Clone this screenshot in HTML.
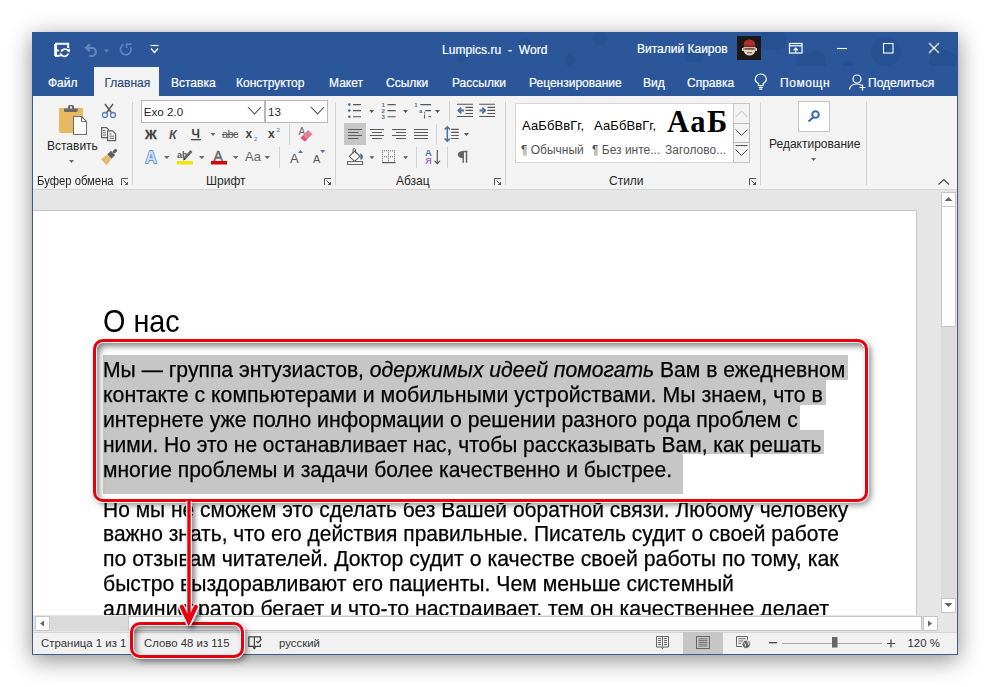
<!DOCTYPE html>
<html><head><meta charset="utf-8">
<style>
*{margin:0;padding:0;box-sizing:border-box}
html,body{width:990px;height:687px;overflow:hidden;background:#fff;font-family:"Liberation Sans",sans-serif}
.a{position:absolute;white-space:nowrap}
svg{position:absolute;overflow:visible}
#win{position:absolute;left:32px;top:32px;width:926px;height:623px;background:#2b579a;box-shadow:0 5px 22px rgba(0,0,0,.45)}
.t{color:#fff;font-size:12px;line-height:14px;-webkit-text-stroke:.2px #fff}
.rb{color:#262626;font-size:12px;line-height:14px}
.sep{position:absolute;width:1px;background:#d4d4d4}
.dl{line-height:14px;font-size:21.7px;color:#000;transform-origin:0 0}
</style></head><body>
<div id="win"></div>

<!-- ============ TITLE BAR ============ -->
<svg style="left:0;top:0" width="990" height="70">
  <defs><clipPath id="tc"><rect x="33" y="32" width="924" height="34"/></clipPath></defs>
  <g fill="#24508f" opacity=".6" clip-path="url(#tc)">
    <circle cx="525" cy="44" r="6"/><circle cx="462" cy="58" r="5"/><circle cx="570" cy="60" r="6"/>
    <circle cx="600" cy="38" r="7"/><rect x="684" y="46" width="20" height="16" rx="5"/>
    <rect x="760" y="30" width="26" height="20" rx="7"/><rect x="796" y="52" width="30" height="20" rx="6" transform="rotate(-12 811 62)"/>
    <circle cx="886" cy="52" r="15"/><rect x="930" y="50" width="26" height="20" rx="5" transform="rotate(20 943 60)"/>
    <circle cx="848" cy="66" r="6"/>
  </g>
  <!-- save -->
  <g fill="none" stroke="#fff" stroke-width="2">
    <path d="M56 56.5 V43.7 H68.2 V48"/><path d="M55.2 55.8 H59.5"/><path d="M55.5 44 V56" stroke-width="2.6"/>
  </g>
  <rect x="56" y="49.5" width="2.8" height="2" fill="#fff"/>
  <g fill="none" stroke="#fff" stroke-width="1.7">
    <path d="M61.2 51.8 A3.9 3.9 0 0 1 68.2 50.8"/><path d="M68.2 53.6 A3.9 3.9 0 0 1 61.3 54.8"/>
  </g>
  <path d="M66.3 50 L70.2 48.6 L69.6 52.8Z M63.2 55.4 L59.4 56.8 L59.9 52.6Z" fill="#fff"/>
  <!-- undo -->
  <g fill="none" stroke="#6386c2" stroke-width="2.2">
    <path d="M86.5 47.8 H91.8 A4.1 4.1 0 0 1 91.8 56 H89.5"/><path d="M89.8 44.3 L86.2 47.8 L89.8 51.3"/>
  </g>
  <path d="M104 49.5 H109 L106.5 52.5Z" fill="#6386c2"/>
  <!-- redo -->
  <g fill="none" stroke="#5e83c0" stroke-width="1.7">
    <path d="M123.5 44.6 A5.3 5.3 0 1 0 130.6 47.2"/><path d="M126.6 48 V44.2 H131.5"/>
  </g>
  <!-- customize -->
  <g fill="none" stroke="#fff" stroke-width="1.2">
    <path d="M150.5 45.5 H158.5"/><path d="M151 48.5 L154.5 52.5 L158 48.5"/>
  </g>
  <!-- ribbon display options -->
  <g fill="none" stroke="#fff" stroke-width="1.2">
    <rect x="789.5" y="43.5" width="12.5" height="9.5"/><path d="M789.5 45.8 H802"/><path d="M795.75 53 V48.3 M793.6 50.4 L795.75 48.2 L797.9 50.4"/>
  </g>
  <!-- min max close -->
  <g fill="none" stroke="#fff" stroke-width="1.1">
    <path d="M837 48.5 H847"/>
    <rect x="883.5" y="43.5" width="9.5" height="9.5"/>
    <path d="M929 43 L939 53 M939 43 L929 53"/>
  </g>
  <!-- avatar -->
  <rect x="737" y="36" width="24" height="24" fill="#1c1818"/>
  <path d="M743.5 45.5 Q743.5 39.5 749.5 39.5 Q755 39.5 755.5 45.5 Z" fill="#b0302e"/>
  <path d="M744 45 H755.5 V47 H744Z" fill="#8e2424"/>
  <path d="M743.5 47 H755.5 V50.5 Q754 55.5 749.5 55.5 Q745 55.5 743.5 50.5Z" fill="#e9d3bb"/>
  <rect x="744.5" y="47.8" width="10" height="2" fill="#6b5a52"/>
  <rect x="747" y="52" width="5" height="1.3" fill="#8a7268"/>
  <rect x="742" y="48" width="1.5" height="3" fill="#e9d3bb"/><rect x="755.5" y="48" width="1.5" height="3" fill="#e9d3bb"/>
</svg>
<div class="a t" style="left:442px;top:43px;letter-spacing:.05px">Lumpics.ru&nbsp; - &nbsp;Word</div>
<div class="a t" style="left:637px;top:42px">Виталий Каиров</div>

<!-- ============ TABS ============ -->
<div class="a" style="left:94px;top:67px;width:65px;height:29px;background:#f3f3f3"></div>
<div class="a t" style="left:48px;top:75.5px">Файл</div>
<div class="a t" style="left:104.5px;top:75.5px;color:#2d4c7c;-webkit-text-stroke:.2px #2d4c7c">Главная</div>
<div class="a t" style="left:171px;top:75.5px">Вставка</div>
<div class="a t" style="left:236px;top:75.5px">Конструктор</div>
<div class="a t" style="left:329px;top:75.5px">Макет</div>
<div class="a t" style="left:386px;top:75.5px">Ссылки</div>
<div class="a t" style="left:452px;top:75.5px">Рассылки</div>
<div class="a t" style="left:529px;top:75.5px">Рецензирование</div>
<div class="a t" style="left:643px;top:75.5px">Вид</div>
<div class="a t" style="left:687px;top:75.5px">Справка</div>
<div class="a t" style="left:780px;top:75.5px;letter-spacing:.6px">Помощн</div>
<div class="a t" style="left:868px;top:75.5px">Поделиться</div>
<svg style="left:0;top:0" width="990" height="100">
  <g fill="none" stroke="#fff" stroke-width="1.2">
    <path d="M758.5 85.5 V83.5 Q755.2 81.8 755.2 79.6 A5.6 5.6 0 0 1 766.4 79.6 Q766.4 81.8 763.1 83.5 V85.5 Z"/>
    <path d="M758.8 87.3 H762.8 M759.3 89.2 H762.3"/>
    <circle cx="857" cy="79" r="4"/><path d="M849.5 89.5 Q850 84 857 84 Q860 84 861.5 85.5"/>
    <path d="M859.5 87.5 H865.5 M862.5 84.5 V90.5"/>
  </g>
</svg>

<!-- ============ RIBBON ============ -->
<div class="a" style="left:33px;top:96px;width:924px;height:94px;background:#f3f3f3;border-bottom:1px solid #d5d5d5"></div>
<!-- group labels -->
<div class="a rb" style="left:37px;top:174px;transform:scaleX(.94);transform-origin:0 0">Буфер обмена</div>
<div class="a rb" style="left:206px;top:174px">Шрифт</div>
<div class="a rb" style="left:396px;top:174px">Абзац</div>
<div class="a rb" style="left:609px;top:174px">Стили</div>
<div class="a rb" style="left:47px;top:139px">Вставить</div>
<div class="a rb" style="left:769px;top:137px">Редактирование</div>
<!-- combos -->
<div class="a" style="left:141px;top:100px;width:124px;height:23px;background:#fff;border:1px solid #b8b8b8"></div>
<div class="a" style="left:265px;top:100px;width:63px;height:23px;background:#fff;border:1px solid #b8b8b8"></div>
<div class="a rb" style="left:143.8px;top:104.6px;font-size:11.6px;letter-spacing:0">Exo 2.0</div>
<div class="a rb" style="left:268px;top:104.6px;font-size:11.6px">13</div>
<!-- styles gallery -->
<div class="a" style="left:515px;top:103px;width:219px;height:60px;background:#fff;border:1px solid #d6d6d6"></div>
<div class="a" style="left:733px;top:103px;width:17px;height:60px;background:#f3f3f3;border:1px solid #c6c6c6"></div>
<div class="a" style="left:733px;top:123px;width:17px;height:20px;border:1px solid #b8b8b8;background:#f3f3f3"></div>
<div class="a" style="left:522px;top:119px;font-size:13px;color:#000;line-height:14px;letter-spacing:.1px">АаБбВвГг,</div>
<div class="a" style="left:594px;top:119px;font-size:13px;color:#000;line-height:14px;letter-spacing:.1px">АаБбВвГг,</div>
<div class="a" style="left:667px;top:106px;font-family:'Liberation Serif',serif;font-weight:bold;font-size:30.6px;line-height:32px;color:#000;letter-spacing:1.5px">АаБ</div>
<div class="a" style="left:521px;top:143px;font-size:12px;color:#555;line-height:14px">¶ Обычный</div>
<div class="a" style="left:592px;top:143px;font-size:12px;color:#555;line-height:14px">¶ Без инте...</div>
<div class="a" style="left:665px;top:143px;font-size:12px;color:#555;line-height:14px">Заголово...</div>
<!-- editing box -->
<div class="a" style="left:798px;top:101px;width:32px;height:31px;background:#fff;border:1px solid #c6c6c6"></div>
<!-- selected align-left bg -->
<div class="a" style="left:344px;top:123px;width:22px;height:22px;background:#c6c6c6"></div>
<svg style="left:0;top:0" width="990" height="200">
  <!-- separators -->
  <g fill="#d2d2d2">
    <rect x="132" y="102" width="1" height="83"/>
    <rect x="335" y="102" width="1" height="83"/>
    <rect x="505" y="102" width="1" height="83"/>
    <rect x="760" y="102" width="1" height="83"/>
    <rect x="866" y="102" width="1" height="83"/>
    <rect x="289" y="124" width="1" height="21"/>
    <rect x="279" y="147" width="1" height="21"/>
    <rect x="449" y="101" width="1" height="20"/>
    <rect x="436" y="124" width="1" height="21"/>
    <rect x="416" y="147" width="1" height="21"/>
    <rect x="447" y="147" width="1" height="21"/>
  </g>
  <!-- launchers -->
  <g fill="none" stroke="#555" stroke-width="1">
    <path d="M121.5 185 V178.5 H128"/><path d="M123.5 180.5 L127.5 184.5 M125 184.5 H127.5 V182"/>
    <path d="M324.5 185 V178.5 H331"/><path d="M326.5 180.5 L330.5 184.5 M328 184.5 H330.5 V182"/>
    <path d="M494.5 185 V178.5 H501"/><path d="M496.5 180.5 L500.5 184.5 M498 184.5 H500.5 V182"/>
    <path d="M749.5 185 V178.5 H756"/><path d="M751.5 180.5 L755.5 184.5 M753 184.5 H755.5 V182"/>
  </g>
  <!-- paste -->
  <rect x="59" y="108" width="24" height="25" rx="1" fill="#e8b964"/>
  <path d="M64 108.5 H77.7 V110.5 Q77.7 112 76.2 112 H65.5 Q64 112 64 110.5Z" fill="#6a6a6a"/><rect x="68" y="105" width="6" height="4.5" rx="1.5" fill="#6a6a6a"/><rect x="70" y="106.5" width="2" height="2" fill="#eee"/>
  <path d="M73.5 116.5 H81.5 L86.5 121.5 V134.5 H73.5Z" fill="#fff" stroke="#6f6f6f" stroke-width="1.1"/>
  <path d="M81.5 116.5 V121.5 H86.5" fill="none" stroke="#6f6f6f" stroke-width="1.1"/>
  <path d="M69 160 H74 L71.5 163Z" fill="#666"/>
  <!-- scissors -->
  <g fill="none" stroke="#5a5a5a" stroke-width="1.5"><path d="M105 104 L112 113.5 M113 104 L106 113.5"/></g>
  <g fill="none" stroke="#5b80b8" stroke-width="1.3"><circle cx="105" cy="115" r="2.5"/><circle cx="113" cy="115" r="2.5"/></g>
  <!-- copy -->
  <g fill="#f3f3f3" stroke="#5f5f5f" stroke-width="1.2">
    <path d="M101.6 127.6 H106.5 L108.5 129.6 V137.6 H101.6Z"/>
    <path d="M107.6 130.8 H112.5 L115.6 133.9 V140.6 H107.6Z"/>
  </g>
  <g stroke="#5f5f5f" stroke-width=".9"><path d="M103 130.6 H105.5 M103 132.8 H106 M103 135 H106 M109.5 134 H111.5 M109.5 136.2 H114 M109.5 138.4 H114"/></g>
  <!-- format painter -->
  <g transform="translate(109.5 156.5) rotate(45)">
    <rect x="-1.6" y="-10" width="3.2" height="4.6" rx="1.2" fill="#5f5f5f"/>
    <rect x="-3" y="-5" width="6" height="5.2" fill="#5f5f5f"/>
    <path d="M-3 0.6 H3 L4.2 8 H-4.2Z" fill="#e6b96a"/>
  </g>
  <!-- chevrons of combos -->
  <g fill="none" stroke="#444" stroke-width="1.1">
    <path d="M248 107 L254.5 114 L261 107"/><path d="M311 107 L317.5 114 L324 107"/>
  </g>
  <!-- font row 2 -->
  <text x="145" y="138.5" font-family="Liberation Sans" font-weight="bold" font-size="13" fill="#444" stroke="#444" stroke-width=".3">Ж</text>
  <text x="169" y="138.5" font-family="Liberation Sans" font-weight="bold" font-style="italic" font-size="12.5" fill="#555">К</text>
  <text x="191.5" y="138" font-family="Liberation Sans" font-weight="bold" font-size="12" fill="#444">Ч</text>
  <rect x="191" y="139" width="10" height="1.3" fill="#444"/>
  <path d="M210.5 133 H215.5 L213 136Z" fill="#666"/>
  <text x="222" y="138" font-family="Liberation Sans" font-size="11" fill="#555" letter-spacing="-.6">abc</text>
  <rect x="222" y="134" width="16" height="1" fill="#555"/>
  <text x="245.5" y="138" font-family="Liberation Sans" font-weight="bold" font-size="12" fill="#444">x</text>
  <text x="254" y="140.5" font-family="Liberation Sans" font-size="6" fill="#4a6fa5">2</text>
  <text x="268" y="138" font-family="Liberation Sans" font-weight="bold" font-size="12" fill="#444">x</text>
  <text x="276.5" y="132" font-family="Liberation Sans" font-size="6" fill="#4a6fa5">2</text>
  <!-- clear formatting -->
  <text x="298.5" y="134.5" font-family="Liberation Sans" font-size="10" fill="#666">A</text>
  <path d="M300.5 138 L308 130 L312.5 134 L305 141.5Z" fill="#e57f98"/>
  <path d="M300.5 138 L303 135.5 L307 139.5 L305 141.5Z" fill="#d65a79"/>
  <!-- font row 3 -->
  <text x="145.3" y="162.5" font-family="Liberation Sans" font-weight="bold" font-size="16" fill="#c9dcf3" stroke="#4f80c4" stroke-width="1.3" paint-order="stroke">A</text>
  <path d="M164 156 H169.5 L166.75 159Z" fill="#666"/>
  <text x="177" y="158" font-family="Liberation Sans" font-weight="bold" font-size="9" fill="#555">ab</text>
  <path d="M184 159 L191.5 151" stroke="#666" stroke-width="2.6"/>
  <path d="M183 160.5 L184 158 L185.5 159.5Z" fill="#333"/>
  <rect x="177" y="161" width="16" height="3.5" fill="#f2e600"/>
  <path d="M199 156 H204.5 L201.75 159Z" fill="#666"/>
  <text x="213.5" y="160.5" font-family="Liberation Sans" font-size="14" fill="#666" stroke="#666" stroke-width=".5">A</text>
  <rect x="211" y="161" width="16" height="3.5" fill="#e00000"/>
  <path d="M233 156 H238.5 L235.75 159Z" fill="#666"/>
  <text x="245" y="161" font-family="Liberation Sans" font-size="13" fill="#666">Aa</text>
  <path d="M264.5 156 H270 L267.25 159Z" fill="#666"/>
  <text x="290" y="162.5" font-family="Liberation Sans" font-size="13" fill="#555">A</text>
  <path d="M298 153 L300.5 150 L303 153Z" fill="#5a7296"/>
  <text x="313" y="162.5" font-family="Liberation Sans" font-size="11" fill="#555">A</text>
  <path d="M320 150 H325.5 L322.75 153Z" fill="#5a7296"/>
  <!-- paragraph row 1 -->
  <g fill="#4f6f9f"><circle cx="349.3" cy="104.6" r="1.3"/><circle cx="349.3" cy="110.6" r="1.3"/><circle cx="349.3" cy="116.7" r="1.3"/></g>
  <g stroke="#555" stroke-width="1.1"><path d="M353 104.6 H361 M353 110.6 H361 M353 116.7 H361"/></g>
  <path d="M369.3 110 H374.2 L371.75 113Z" fill="#555"/>
  <g font-family="Liberation Sans" font-size="6" fill="#4f6f9f" font-weight="bold"><text x="381.6" y="106.8">1</text><text x="381.6" y="112.8">2</text><text x="381.6" y="118.9">3</text></g>
  <g stroke="#555" stroke-width="1.1"><path d="M387.5 104.6 H395.7 M387.5 110.6 H395.7 M387.5 116.7 H395.7"/></g>
  <path d="M403.1 110 H408 L405.55 113Z" fill="#555"/>
  <g font-family="Liberation Sans" font-size="6" fill="#4f6f9f" font-weight="bold"><text x="414.3" y="106.8">1</text><text x="419" y="112.8">a</text></g>
  <path d="M424.6 114.5 V118.5" stroke="#555" stroke-width="1"/><rect x="424" y="112.3" width="1.2" height="1.2" fill="#555"/>
  <g stroke="#555" stroke-width="1.1"><path d="M420.3 104.6 H431 M425.3 110.6 H431 M428.4 116.7 H431"/></g>
  <path d="M435 110 H440 L437.5 113Z" fill="#555"/>
  <g stroke="#555" stroke-width="1.1"><path d="M457 104.3 H473 M465.5 107.4 H473 M465.5 110.4 H473 M465.5 113.5 H473 M457 116.5 H473"/>
  <path d="M479.2 104.3 H495 M487.5 107.4 H495 M487.5 110.4 H495 M487.5 113.5 H495 M479.2 116.5 H495"/></g>
  <g fill="none" stroke="#4f6f9f" stroke-width="1.8"><path d="M464 110.5 H458.5 M461.3 107.7 L458.3 110.5 L461.3 113.3"/><path d="M479.5 110.5 H485 M482.2 107.7 L485.2 110.5 L482.2 113.3"/></g>
  <!-- paragraph row 2 -->
  <g stroke="#5a5a5a" stroke-width="1.2">
    <path d="M348 129.5 H362 M348 132.5 H358.5 M348 135.5 H362 M348 138.5 H358.5"/>
    <path d="M370 129.5 H384 M372 132.5 H382 M370 135.5 H384 M372 138.5 H382"/>
    <path d="M392 129.5 H406 M396 132.5 H406 M392 135.5 H406 M396 138.5 H406"/>
    <path d="M414 129.5 H428 M414 132.5 H428 M414 135.5 H428 M414 138.5 H428"/>
    <path d="M451.2 129.4 H458.8 M451.2 132.4 H458.8 M451.2 135.5 H458.8 M451.2 138.5 H458.8"/>
  </g>
  <g fill="none" stroke="#4f6f9f" stroke-width="1.5"><path d="M447.3 127 V141 M444.6 129.6 L447.3 126.8 L450 129.6 M444.6 138.4 L447.3 141.2 L450 138.4"/></g>
  <path d="M463.9 133.1 H469 L466.45 136Z" fill="#555"/>
  <!-- paragraph row 3 -->
  <path d="M349.4 156.3 L354.7 151 L360 156.3 L354.6 161.3Z" fill="#fff" stroke="#5a5a5a" stroke-width="1.1"/>
  <path d="M353 153.5 V149.8 Q353 148.6 354.2 148.6 Q355.5 148.6 355.5 149.8 V153" fill="none" stroke="#5a5a5a" stroke-width="1"/>
  <path d="M360.2 153.3 Q363.3 154.3 362.8 157.5 Q362.3 160 360.3 159.8Z" fill="#4f6f9f"/>
  <rect x="347.6" y="161.6" width="15" height="2.8" fill="#fff" stroke="#5a5a5a" stroke-width="1"/>
  <path d="M369.5 156.2 H374.3 L371.9 159Z" fill="#555"/>
  <g fill="#666">
    <rect x="382" y="150.3" width="1" height="1"/><rect x="384" y="150.3" width="1" height="1"/><rect x="386" y="150.3" width="1" height="1"/><rect x="388" y="150.3" width="1" height="1"/><rect x="390" y="150.3" width="1" height="1"/><rect x="392" y="150.3" width="1" height="1"/><rect x="394" y="150.3" width="1" height="1"/>
    <rect x="382" y="152.3" width="1" height="1"/><rect x="388" y="152.3" width="1" height="1"/><rect x="394" y="152.3" width="1" height="1"/>
    <rect x="382" y="154.3" width="1" height="1"/><rect x="388" y="154.3" width="1" height="1"/><rect x="394" y="154.3" width="1" height="1"/>
    <rect x="382" y="156.3" width="1" height="1"/><rect x="384" y="156.3" width="1" height="1"/><rect x="386" y="156.3" width="1" height="1"/><rect x="388" y="156.3" width="1" height="1"/><rect x="390" y="156.3" width="1" height="1"/><rect x="392" y="156.3" width="1" height="1"/><rect x="394" y="156.3" width="1" height="1"/>
    <rect x="382" y="158.3" width="1" height="1"/><rect x="388" y="158.3" width="1" height="1"/><rect x="394" y="158.3" width="1" height="1"/>
    <rect x="382" y="160.3" width="1" height="1"/><rect x="388" y="160.3" width="1" height="1"/><rect x="394" y="160.3" width="1" height="1"/>
  </g>
  <rect x="382" y="162" width="13.5" height="1.2" fill="#555"/>
  <path d="M403.2 156.2 H408.1 L405.65 159Z" fill="#555"/>
  <text x="425" y="156.3" font-family="Liberation Sans" font-weight="bold" font-size="9.5" fill="#4f77b0">A</text>
  <text x="425.3" y="164" font-family="Liberation Sans" font-weight="bold" font-size="9" fill="#a070c0">Я</text>
  <g fill="none" stroke="#5a5a5a" stroke-width="1.2"><path d="M437.3 150 V163.5 M434.6 160.8 L437.3 163.6 L440 160.8"/></g>
  <path d="M463 151.5 H467.5 M463.2 151.5 V162.7 M466.5 151.5 V162.7" stroke="#666" stroke-width="1.5"/>
  <path d="M463.5 151 Q457.8 151 457.8 154.6 Q457.8 158.3 463.5 158.3Z" fill="#666"/>
  <!-- styles scroll chevrons -->
  <g fill="none" stroke="#c0c0c0" stroke-width="1"><path d="M735.5 117 L741.5 111 L747.5 117"/></g>
  <g fill="none" stroke="#555" stroke-width="1"><path d="M735.5 129.5 L741.5 135.5 L747.5 129.5"/><path d="M735.5 145.5 H747.5 M735.5 149.5 L741.5 155.5 L747.5 149.5"/></g>
  <!-- magnifier -->
  <g fill="none" stroke="#3b6aa9" stroke-width="2"><circle cx="815.5" cy="114.5" r="3.3"/><path d="M813 117.5 L808.5 121.5"/></g>
  <path d="M811 158 H816 L813.5 161Z" fill="#666"/>
  <!-- collapse ribbon -->
  <path d="M938.5 184.5 L943.8 179.5 L949 184.5" fill="none" stroke="#444" stroke-width="1.1"/>
</svg>

<!-- ============ DOC AREA ============ -->
<div class="a" style="left:33px;top:190px;width:924px;height:426px;background:#e6e6e6"></div>
<div class="a" style="left:33px;top:210px;width:884px;height:406px;background:#fff;border-top:1px solid #c6c6c6;border-right:1px solid #c6c6c6"></div>
<div class="a" style="left:33px;top:211px;width:883px;height:404px;overflow:hidden">
  <div style="position:absolute;left:70px;top:144px;width:745px;height:25px;background:#c6c6c6"></div>
  <div style="position:absolute;left:70px;top:169px;width:723px;height:25px;background:#c6c6c6"></div>
  <div style="position:absolute;left:70px;top:194px;width:697px;height:25px;background:#c6c6c6"></div>
  <div style="position:absolute;left:70px;top:219px;width:721px;height:24px;background:#c6c6c6"></div>
  <div style="position:absolute;left:70px;top:243px;width:580px;height:40px;background:#c6c6c6"></div>
  <div class="a" style="left:69.5px;top:96px;font-size:31.3px;line-height:30px;color:#000;transform:scaleX(.92);transform-origin:0 0">О нас</div>
  <div class="a" style="left:69.5px;top:146.35px;font-size:21.2px;line-height:25px;color:#000;-webkit-text-stroke:.25px #000;transform:scaleX(0.9973);transform-origin:0 0">Мы — группа энтузиастов, <i>одержимых идеей помогать</i> Вам в ежедневном</div>
  <div class="a" style="left:69.5px;top:171.15px;font-size:21.2px;line-height:25px;color:#000;-webkit-text-stroke:.25px #000;transform:scaleX(1.0057);transform-origin:0 0">контакте с компьютерами и мобильными устройствами. Мы знаем, что в</div>
  <div class="a" style="left:69.5px;top:195.95px;font-size:21.2px;line-height:25px;color:#000;-webkit-text-stroke:.25px #000;transform:scaleX(1.0020);transform-origin:0 0">интернете уже полно информации о решении разного рода проблем с</div>
  <div class="a" style="left:69.5px;top:220.75px;font-size:21.2px;line-height:25px;color:#000;-webkit-text-stroke:.25px #000;transform:scaleX(0.9897);transform-origin:0 0">ними. Но это не останавливает нас, чтобы рассказывать Вам, как решать</div>
  <div class="a" style="left:69.5px;top:245.55px;font-size:21.2px;line-height:25px;color:#000;-webkit-text-stroke:.25px #000;transform:scaleX(0.9932);transform-origin:0 0">многие проблемы и задачи более качественно и быстрее.</div>
  <div class="a" style="left:69.5px;top:285.55px;font-size:21.2px;line-height:25px;color:#000;-webkit-text-stroke:.25px #000;transform:scaleX(0.9896);transform-origin:0 0">Но мы не сможем это сделать без Вашей обратной связи. Любому человеку</div>
  <div class="a" style="left:69.5px;top:310.35px;font-size:21.2px;line-height:25px;color:#000;-webkit-text-stroke:.25px #000;transform:scaleX(0.9903);transform-origin:0 0">важно знать, что его действия правильные. Писатель судит о своей работе</div>
  <div class="a" style="left:69.5px;top:335.15px;font-size:21.2px;line-height:25px;color:#000;-webkit-text-stroke:.25px #000;transform:scaleX(1.0036);transform-origin:0 0">по отзывам читателей. Доктор судит о качестве своей работы по тому, как</div>
  <div class="a" style="left:69.5px;top:359.95px;font-size:21.2px;line-height:25px;color:#000;-webkit-text-stroke:.25px #000;transform:scaleX(0.9996);transform-origin:0 0">быстро выздоравливают его пациенты. Чем меньше системный</div>
  <div class="a" style="left:69.5px;top:384.75px;font-size:21.2px;line-height:25px;color:#000;-webkit-text-stroke:.25px #000;transform:scaleX(1.0063);transform-origin:0 0">администратор бегает и что-то настраивает, тем он качественнее делает</div>
</div>

<!-- ============ SCROLLBARS ============ -->
<div class="a" style="left:941px;top:192px;width:15px;height:421px;background:#dcdcdc"></div>
<div class="a" style="left:941px;top:192px;width:15px;height:15px;background:#fff;border:1px solid #c6c6c6"></div>
<div class="a" style="left:941px;top:206px;width:15px;height:121px;background:#fff;border:1px solid #c6c6c6"></div>
<div class="a" style="left:941px;top:598px;width:15px;height:15px;background:#fff;border:1px solid #c6c6c6"></div>
<div class="a" style="left:33px;top:615px;width:924px;height:17px;background:#e6e6e6"></div>
<div class="a" style="left:35px;top:616px;width:903px;height:15px;background:#dadada"></div>
<div class="a" style="left:35px;top:616px;width:15px;height:15px;background:#fff;border:1px solid #c6c6c6"></div>
<div class="a" style="left:128px;top:616px;width:794px;height:15px;background:#fff;border:1px solid #c6c6c6"></div>
<div class="a" style="left:923px;top:616px;width:15px;height:15px;background:#fff;border:1px solid #c6c6c6"></div>
<svg style="left:0;top:0" width="990" height="687">
  <path d="M944.5 201 L948.5 197 L952.5 201Z" fill="#666"/>
  <path d="M944.5 603 L948.5 607 L952.5 603Z" fill="#666"/>
  <path d="M44 620.5 L40 623.5 L44 626.5Z" fill="#666"/>
  <path d="M928 620.5 L932 623.5 L928 626.5Z" fill="#666"/>
</svg>

<!-- ============ STATUS BAR ============ -->
<div class="a" style="left:33px;top:632px;width:924px;height:22px;background:#f1f1f1;border-top:1px solid #d5d5d5"></div>
<div class="a" style="left:41px;top:636.5px;font-size:11.4px;line-height:13px;color:#333">Страница 1 из 1</div>
<div class="a" style="left:144px;top:636.5px;font-size:11.4px;line-height:13px;color:#333">Слово 48 из 115</div>
<div class="a" style="left:279px;top:636.5px;font-size:11.4px;line-height:13px;color:#333">русский</div>
<div class="a" style="left:683px;top:632px;width:40px;height:22px;background:#c6c6c6"></div>
<div class="a" style="left:907.5px;top:636.5px;font-size:11.4px;line-height:13px;color:#333">120 %</div>
<svg style="left:0;top:0" width="990" height="687">
  <g fill="none" stroke="#666" stroke-width="1">
    <path d="M254.4 636.8 H248.8 V646.4 H254.4 M254.4 636.8 V648.5 M253 647.3 L254.4 648.7 L255.8 647.3 M254.4 636.8 H260.4 V639.6 M260.4 644 V646.4 H254.4 M256.4 641.2 L257.9 642.8 L261.6 639.3" stroke="#444" stroke-width="1.2"/>
    <path d="M656.5 636.5 H668.5 V647 H663.3 L662.5 648.8 L661.7 647 H656.5Z M662.5 636.5 V647 M658 638.6 H661 M658 640.6 H661 M658 642.6 H661 M658 644.6 H661 M664 638.6 H667 M664 640.6 H667 M664 642.6 H667 M664 644.6 H667"/>
    <rect x="696.5" y="636.5" width="13" height="12"/>
  </g>
  <g stroke="#666" stroke-width=".9"><path d="M698.5 638.8 H707.5 M698.5 640.6 H707.5 M698.5 642.4 H707.5 M698.5 644.2 H707.5 M698.5 646 H707.5"/></g>
  <g fill="none" stroke="#666" stroke-width="1">
    <path d="M742.5 646.5 H736.5 V636.5 H747.5 V640 M738.5 638.7 H745.5 M738.5 641 H743 M738.5 643.3 H741"/>
  </g>
  <circle cx="746.2" cy="644.3" r="4.2" fill="#666" stroke="#f1f1f1" stroke-width="1"/>
  <path d="M743.5 642.5 Q746 643.5 745.5 646.5 M747 641 Q748.5 643 748.8 645" fill="none" stroke="#eee" stroke-width=".9"/>
  <rect x="769" y="642" width="8" height="1.3" fill="#444"/>
  <rect x="782" y="643" width="100" height="1" fill="#aaa"/>
  <rect x="832" y="637" width="5.5" height="10.5" fill="#666"/>
  <path d="M887 643.5 H895 M891 639.5 V647.5" stroke="#444" stroke-width="1.2"/>
</svg>

<div class="a" style="left:32px;top:96px;width:926px;height:559px;border:1px solid #3d5c87;border-top:none"></div>
<!-- ============ ANNOTATIONS ============ -->
<style>
.rbox{position:absolute;border:3px solid #e8000e;border-radius:10px;box-shadow:0 0 0 1px rgba(255,255,255,.9),inset 0 0 0 1px rgba(255,255,255,.9),inset 3px 4px 6px rgba(0,0,0,.5),3px 3px 6px rgba(0,0,0,.45)}
</style>
<div class="rbox" style="left:93px;top:339px;width:775px;height:163px"></div>
<div class="rbox" style="left:130px;top:622px;width:114px;height:36px"></div>
<svg style="left:0;top:0" width="990" height="687">
  <defs><filter id="sh" x="-50%" y="-20%" width="200%" height="140%"><feDropShadow dx="3" dy="3" stdDeviation="2.5" flood-color="#000" flood-opacity=".5"/></filter></defs>
  <g filter="url(#sh)">
    <path d="M189 501 V620" stroke="#fff" stroke-width="5.6"/>
    <path d="M181.8 606.8 L188.8 622.5 L195.8 606.8" fill="none" stroke="#fff" stroke-width="6.6" stroke-linejoin="round" stroke-linecap="round"/>
    <path d="M189 501 V618" stroke="#e8000e" stroke-width="3.4"/>
    <path d="M181.8 606.8 L188.8 621.5 L195.8 606.8" fill="none" stroke="#e8000e" stroke-width="4.2" stroke-linejoin="miter" stroke-linecap="round"/>
  </g>
</svg>
</body></html>
